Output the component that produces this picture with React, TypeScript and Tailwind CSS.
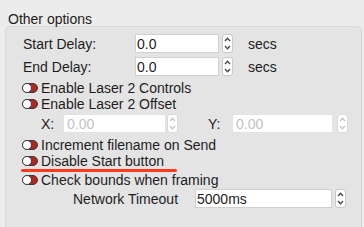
import React from "react";

function Toggle() {
  return (
    <span className="relative inline-flex h-[10px] w-[16px] shrink-0 items-center rounded-full border border-[#3a3a3a] bg-[#b3261e]">
      <span className="absolute left-[-1px] top-[-1px] h-[10px] w-[10px] rounded-full border border-[#3a3a3a] bg-white" />
    </span>
  );
}

function Spinner({ disabled }: { disabled?: boolean }) {
  const c = disabled ? "#c4c4c4" : "#444";
  return (
    <span className={"flex h-[19px] w-[11px] shrink-0 flex-col items-center justify-between rounded-[3px] border bg-white py-[2px] " + (disabled ? "border-[#dadada]" : "border-[#c9c9c9]")}>
      <svg width="7" height="5" viewBox="0 0 7 5"><path d="M1 4 L3.5 1.3 L6 4" stroke={c} strokeWidth="1.3" fill="none" /></svg>
      <svg width="7" height="5" viewBox="0 0 7 5"><path d="M1 1 L3.5 3.7 L6 1" stroke={c} strokeWidth="1.3" fill="none" /></svg>
    </span>
  );
}

function Check({ label, className }: { label: string; className?: string }) {
  return (
    <div className={"flex h-[16px] items-center gap-[3px] pl-[16px] " + (className ?? "")}>
      <Toggle />
      <span>{label}</span>
    </div>
  );
}

export default function App() {
  return (
    <div className="h-[227px] w-[364px] overflow-hidden bg-[#ececec] text-[14px] leading-none text-[#1d1d1d]" style={{ fontFamily: '"Liberation Sans", Arial, sans-serif' }}>
      <div className="h-[26px] pl-[8px] pt-[12px]">Other options</div>
      <div className="ml-[5px] mr-[2px] h-[220px] rounded-[5px] border border-[#d8d8d8] bg-[#e4e4e4] pt-[7px]">
        <div className="flex h-[19px] items-center">
          <span className="w-[129px] pl-[17px]">Start Delay:</span>
          <div className="flex h-[19px] w-[84px] items-center border border-[#d0d0d0] bg-white pl-[1px]">0.0</div>
          <div className="ml-[3px]"><Spinner /></div>
          <span className="ml-[15px]">secs</span>
        </div>
        <div className="mt-[4px] flex h-[19px] items-center">
          <span className="w-[129px] pl-[17px]">End Delay:</span>
          <div className="flex h-[19px] w-[84px] items-center border border-[#d0d0d0] bg-white pl-[1px]">0.0</div>
          <div className="ml-[3px]"><Spinner /></div>
          <span className="ml-[15px]">secs</span>
        </div>
        <Check label="Enable Laser 2 Controls" className="mt-[4px]" />
        <Check label="Enable Laser 2 Offset" />
        <div className="mt-[2px] flex h-[19px] items-center">
          <span className="w-[57px] pl-[35px]">X:</span>
          <div className="flex h-[19px] w-[103px] items-center border border-[#e2e2e2] bg-white pl-[3px] text-[#c2c2c2]">0.00</div>
          <div className="ml-[1px]"><Spinner disabled /></div>
          <span className="ml-[30px] w-[24px]">Y:</span>
          <div className="flex h-[19px] w-[101px] items-center border border-[#e2e2e2] bg-white pl-[3px] text-[#c2c2c2]">0.00</div>
          <div className="ml-[4px]"><Spinner disabled /></div>
        </div>
        <Check label="Increment filename on Send" className="mt-[4px]" />
        <Check label="Disable Start button" />
        <div className="ml-[15px] h-[3px] w-[156px] rounded-full bg-[#ff3a1c]" />
        <Check label="Check bounds when framing" className="h-[15px]" />
        <div className="mt-[1px] flex h-[19px] items-center">
          <span className="w-[189px] pl-[67px]">Network Timeout</span>
          <div className="flex h-[19px] w-[137px] items-center border border-[#d0d0d0] bg-white pl-[1px]">5000ms</div>
          <div className="ml-[3px]"><Spinner /></div>
        </div>
      </div>
    </div>
  );
}
